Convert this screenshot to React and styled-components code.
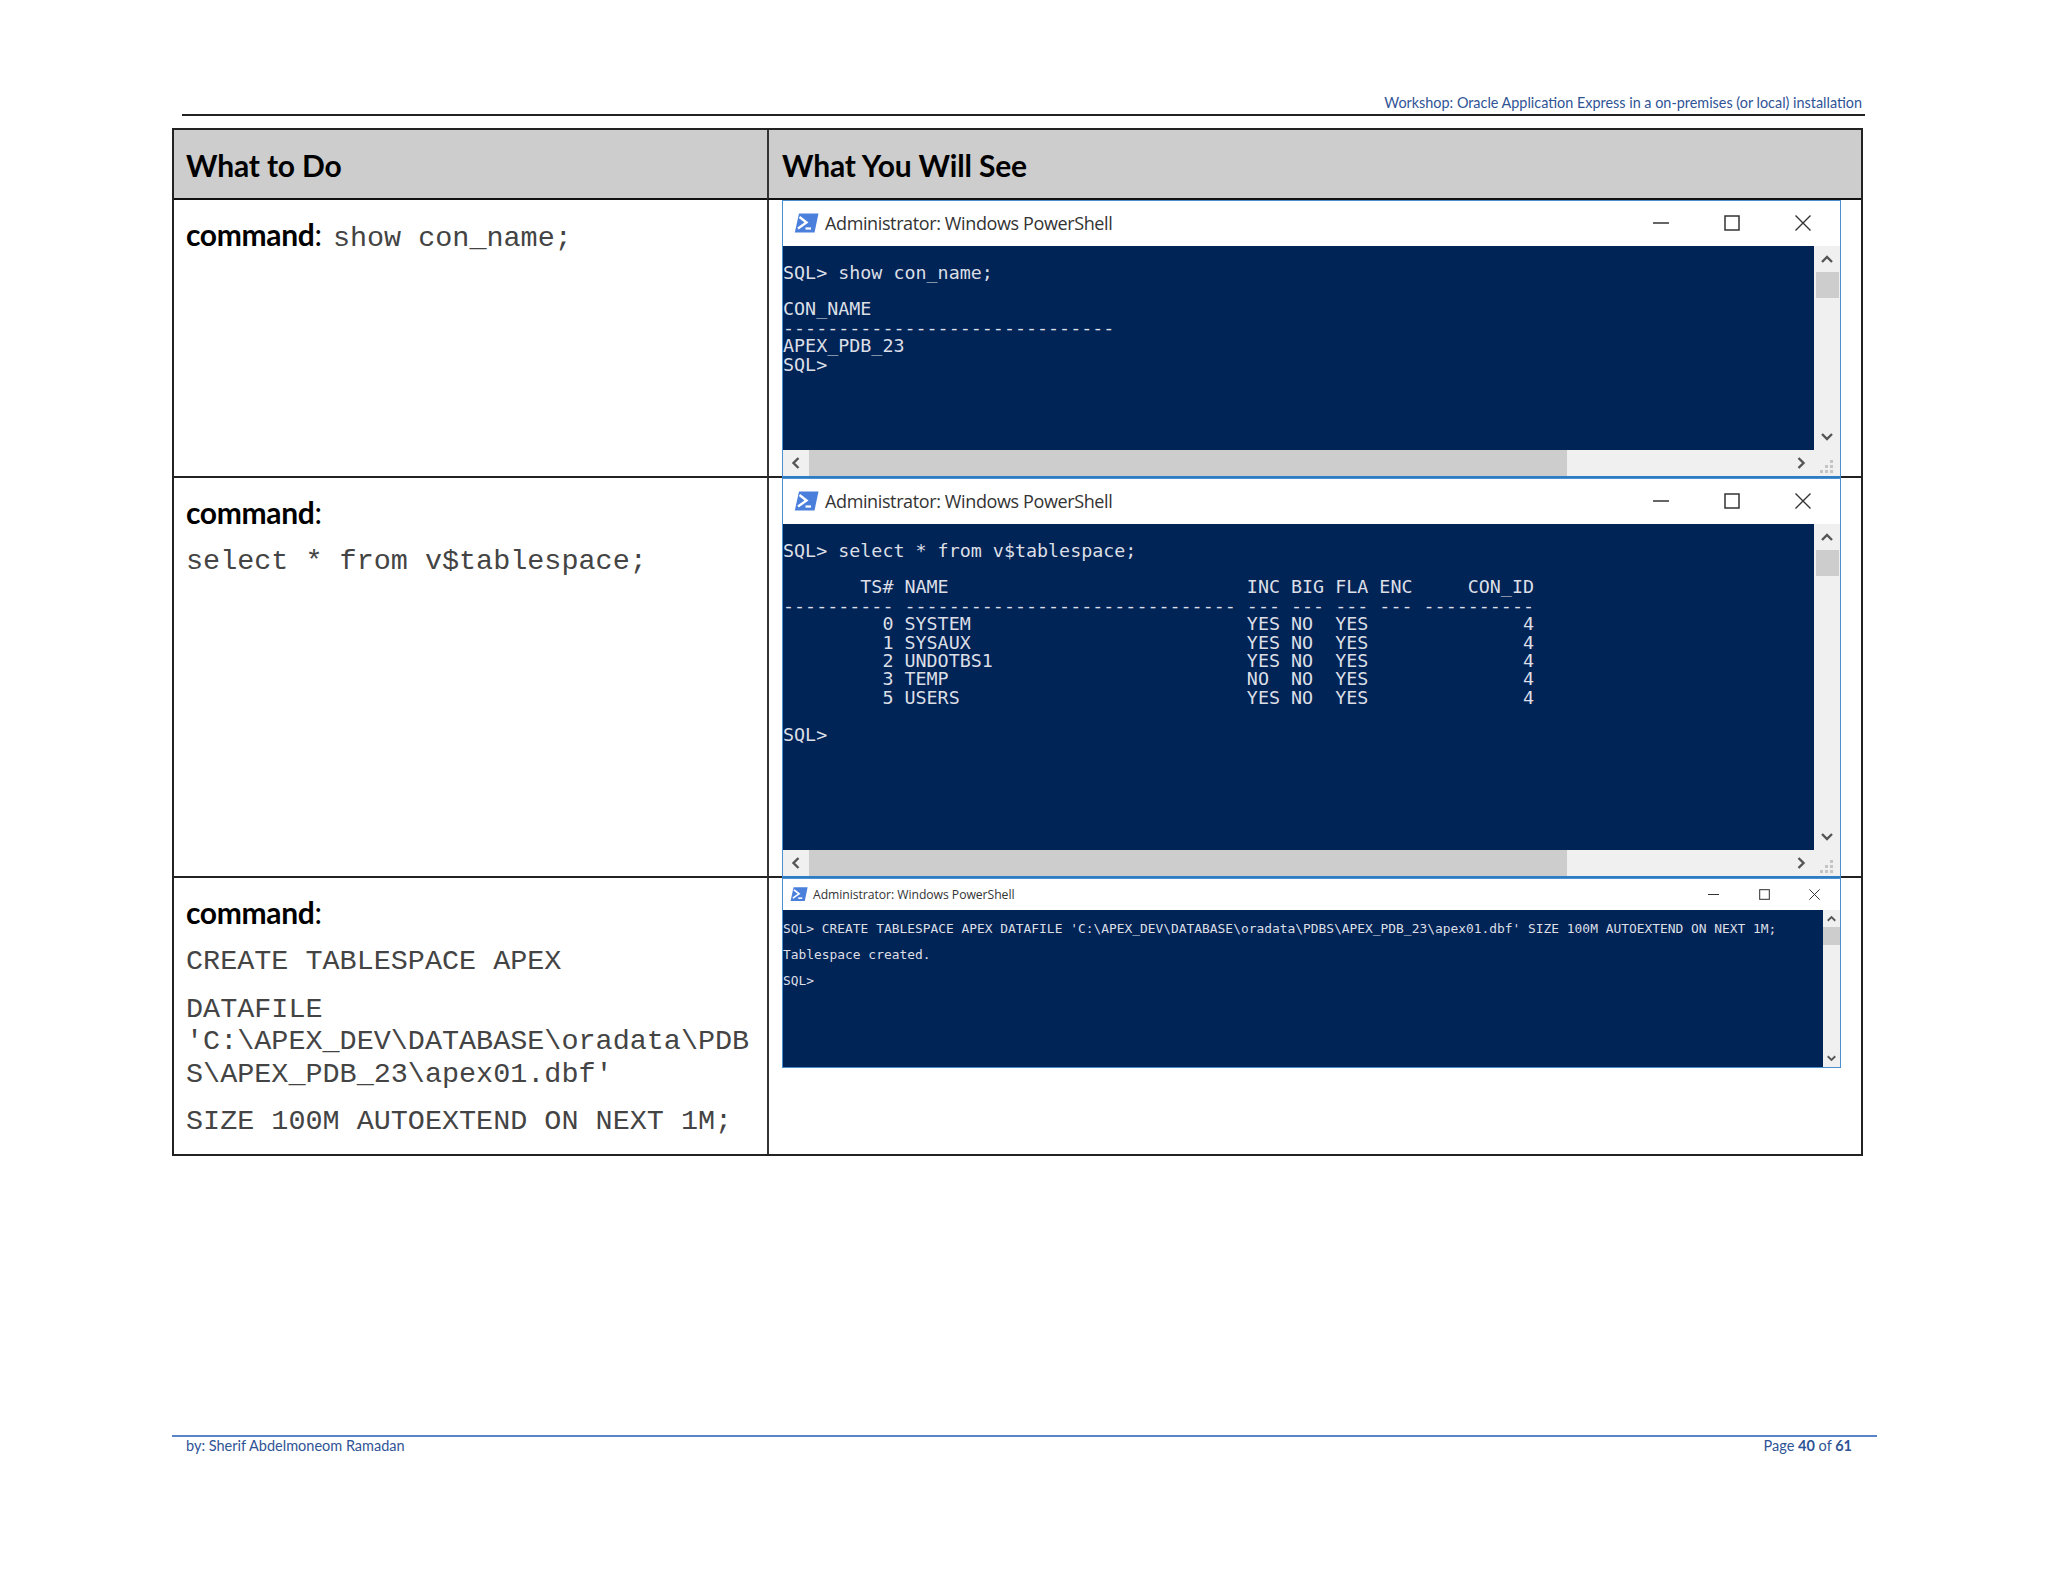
import React from 'react'
import styled, { createGlobalStyle } from 'styled-components'

const GlobalStyle = createGlobalStyle`
  html, body { margin: 0; padding: 0; background: #fff; }
  body { font-family: Lato, "Open Sans", sans-serif; color: #000; }
`

const Page = styled.div`
  width: 2048px;
  height: 1582px;
  box-sizing: border-box;
  padding-top: 94px;
  display: flex;
  flex-direction: column;
`
const PageHeader = styled.div`
  margin-left: 182px;
  width: 1683px;
  height: 22px;
  box-sizing: border-box;
  border-bottom: 2px solid #222;
  padding-right: 3px;
  text-align: right;
  font-size: 14.4px;
  line-height: 18px;
  color: #2f5496;
`
const Table = styled.div`
  margin: 12px 0 0 172px;
  width: 1691px;
  box-sizing: border-box;
  border: 2px solid #222;
  display: grid;
  grid-template-columns: 593px 1fr;
  grid-template-rows: 70px 278px 400px 276px;
`
const HeadCell = styled.div`
  background: #cdcdcd;
  border-bottom: 2px solid #111;
  border-left: ${p => (p.$first ? 'none' : '2px solid #333')};
  padding: 17px 0 0 ${p => (p.$first ? '12px' : '13px')};
  font-size: 30px;
  line-height: 36px;
  font-weight: 700;
  letter-spacing: -0.15px;
`
const TextCell = styled.div`
  border-bottom: ${p => (p.$last ? 'none' : '2px solid #222')};
  padding: 15px 12px 0 12px;
`
const ShotCell = styled.div`
  border-left: 2px solid #333;
  border-bottom: ${p => (p.$last ? 'none' : '2px solid #222')};
  padding-left: 13px;
  padding-right: 20px;
`
const Label = styled.div`
  font-size: 30px;
  line-height: 38px;
  letter-spacing: -0.35px;
  margin-bottom: ${p => p.$gap || 0}px;
  strong { font-weight: 700; }
  span { font-weight: 400; }
`
const Code = styled.span`
  font-family: "Liberation Mono", "Courier New", monospace;
  font-size: 28.45px;
  letter-spacing: 0;
  margin-left: 4px;
  color: #444;
`
const CodeBlock = styled.div`
  font-family: "Liberation Mono", "Courier New", monospace;
  font-size: 28.45px;
  line-height: 32.5px;
  color: #444;
  margin-bottom: 15px;
  overflow-wrap: anywhere;
`

const Win = styled.div`
  height: ${p => p.$height}px;
  box-sizing: border-box;
  border: 1.5px solid #4a90d0;
  ${p => (p.$scrollH ? 'border-bottom-width: 2px; border-bottom-color: #2d7cc4;' : '')}
  background: #fff;
  display: flex;
  flex-direction: column;
`
const TitleBar = styled.div`
  flex: none;
  height: ${p => (p.$small ? 31 : 45)}px;
  box-sizing: border-box;
  padding-bottom: 1px;
  display: flex;
  align-items: center;
  padding-left: ${p => (p.$small ? 7 : 11)}px;
  gap: ${p => (p.$small ? 5 : 6)}px;
  font-family: "Open Sans", sans-serif;
  font-size: ${p => (p.$small ? 12.2 : 18)}px;
  letter-spacing: ${p => (p.$small ? -0.05 : -0.38)}px;
  color: #333;
`
const TitleText = styled.div`
  flex: 1;
  white-space: nowrap;
`
const Controls = styled.div`
  display: flex;
  align-items: center;
  gap: ${p => (p.$small ? 39.5 : 55)}px;
  padding-right: ${p => (p.$small ? 20 : 29)}px;
  svg { display: block; }
`
const Body = styled.div`
  flex: 1;
  min-height: 0;
  display: flex;
`
const Terminal = styled.pre`
  flex: 1;
  margin: 0;
  padding-top: ${p => (p.$small ? 11.5 : 17.5)}px;
  background: #012456;
  color: #dcdfe6;
  font-family: "DejaVu Sans Mono", "Liberation Mono", monospace;
  font-size: ${p => (p.$small ? 12.9 : 18.35)}px;
  line-height: ${p => (p.$small ? 13.2 : 18.4)}px;
  overflow: hidden;
`
const VScroll = styled.div`
  flex: none;
  width: ${p => (p.$small ? 17 : 26)}px;
  background: #f0f0f0;
  display: flex;
  flex-direction: column;
  align-items: center;
  box-sizing: border-box;
  svg { display: block; flex: none; }
`
const ArrowBox = styled.div`
  flex: none;
  height: ${p => p.$size}px;
  display: flex;
  align-items: center;
  justify-content: center;
`
const VThumb = styled.div`
  flex: none;
  width: ${p => (p.$small ? 17 : 23)}px;
  height: ${p => (p.$small ? 18 : 26)}px;
  background: #cdcdcd;
`
const Spacer = styled.div`
  flex: 1;
`
const HScroll = styled.div`
  flex: none;
  height: 26px;
  background: #f0f0f0;
  display: flex;
  align-items: center;
`
const HArrow = styled.div`
  flex: none;
  width: ${p => p.$w}px;
  height: 100%;
  display: flex;
  align-items: center;
  justify-content: center;
`
const HThumb = styled.div`
  flex: none;
  width: 758px;
  height: 100%;
  background: #cdcdcd;
`
const Grip = styled.div`
  flex: none;
  width: 26px;
  height: 100%;
  display: flex;
  align-items: flex-end;
  justify-content: center;
  padding-bottom: 2px;
  box-sizing: border-box;
`
const PageFooter = styled.div`
  margin: 279px 0 0 172px;
  width: 1705px;
  box-sizing: border-box;
  border-top: 2px solid #5b84c8;
  padding: 0 25px 0 14px;
  display: flex;
  justify-content: space-between;
  font-size: 14.5px;
  line-height: 18px;
  color: #2f5496;
  strong { font-weight: 700; }
`

const PsIcon = ({ size }) => (
  <svg width={size} height={size * 0.8} viewBox="0 0 25 20">
    <path d="M5 0.5H24.5L20.5 19.5H0.8Z" fill="#4a7fdc" />
    <path d="M5.5 4L12.5 9.5L4 15.5" fill="none" stroke="#fff" strokeWidth="2.4" />
    <path d="M11.5 15.5H17" stroke="#fff" strokeWidth="2.2" />
  </svg>
)

const WinButtons = ({ small }) => {
  const s = small ? 11 : 16
  return (
    <Controls $small={small}>
      <svg width={s} height={s} viewBox="0 0 16 16"><path d="M0 8H16" stroke="#333" strokeWidth="1.5" /></svg>
      <svg width={s} height={s} viewBox="0 0 16 16"><rect x="1" y="1" width="14" height="14" fill="none" stroke="#333" strokeWidth="1.5" /></svg>
      <svg width={s} height={s} viewBox="0 0 16 16"><path d="M0.5 0.5L15.5 15.5M15.5 0.5L0.5 15.5" stroke="#333" strokeWidth="1.4" /></svg>
    </Controls>
  )
}

const Chevron = ({ dir, size = 12 }) => {
  const paths = {
    up: 'M1 9L6 4L11 9',
    down: 'M1 3L6 8L11 3',
    left: 'M8.5 1L3.5 6L8.5 11',
    right: 'M3.5 1L8.5 6L3.5 11',
  }
  return (
    <svg width={size} height={size} viewBox="0 0 12 12">
      <path d={paths[dir]} fill="none" stroke="#555" strokeWidth="2.4" />
    </svg>
  )
}

const GripDots = () => (
  <svg width="14" height="14" viewBox="0 0 14 14" fill="#c4c4c4">
    <rect x="10" y="0" width="3" height="3" />
    <rect x="5" y="5" width="3" height="3" />
    <rect x="10" y="5" width="3" height="3" />
    <rect x="0" y="10" width="3" height="3" />
    <rect x="5" y="10" width="3" height="3" />
    <rect x="10" y="10" width="3" height="3" />
  </svg>
)

const ShellWindow = ({ height, small, text }) => (
  <Win $height={height} $scrollH={!small}>
    <TitleBar $small={small}>
      <PsIcon size={small ? 18 : 25} />
      <TitleText>Administrator: Windows PowerShell</TitleText>
      <WinButtons small={small} />
    </TitleBar>
    <Body>
      <Terminal $small={small}>{text}</Terminal>
      <VScroll $small={small}>
        <ArrowBox $size={small ? 17 : 26}><Chevron dir="up" size={small ? 9 : 12} /></ArrowBox>
        <VThumb $small={small} />
        <Spacer />
        <ArrowBox $size={small ? 17 : 26}><Chevron dir="down" size={small ? 9 : 12} /></ArrowBox>
      </VScroll>
    </Body>
    {!small && (
      <HScroll>
        <HArrow $w={26}><Chevron dir="left" /></HArrow>
        <HThumb />
        <Spacer />
        <HArrow $w={26}><Chevron dir="right" /></HArrow>
        <Grip><GripDots /></Grip>
      </HScroll>
    )}
  </Win>
)

const conNameText = `SQL> show con_name;

CON_NAME
------------------------------
APEX_PDB_23
SQL>`

const tablespaceText = `SQL> select * from v$tablespace;

       TS# NAME                           INC BIG FLA ENC     CON_ID
---------- ------------------------------ --- --- --- --- ----------
         0 SYSTEM                         YES NO  YES              4
         1 SYSAUX                         YES NO  YES              4
         2 UNDOTBS1                       YES NO  YES              4
         3 TEMP                           NO  NO  YES              4
         5 USERS                          YES NO  YES              4

SQL>`

const createText = `SQL> CREATE TABLESPACE APEX DATAFILE 'C:\\APEX_DEV\\DATABASE\\oradata\\PDBS\\APEX_PDB_23\\apex01.dbf' SIZE 100M AUTOEXTEND ON NEXT 1M;

Tablespace created.

SQL>`

export default function App() {
  return (
    <Page>
      <GlobalStyle />
      <PageHeader>Workshop: Oracle Application Express in a on-premises (or local) installation</PageHeader>
      <Table>
        <HeadCell $first>What to Do</HeadCell>
        <HeadCell>What You Will See</HeadCell>

        <TextCell>
          <Label><strong>command</strong><span>: </span><Code>show con_name;</Code></Label>
        </TextCell>
        <ShotCell>
          <ShellWindow height={278} text={conNameText} />
        </ShotCell>

        <TextCell>
          <Label $gap={15}><strong>command</strong><span>:</span></Label>
          <CodeBlock>select * from v$tablespace;</CodeBlock>
        </TextCell>
        <ShotCell>
          <ShellWindow height={400} text={tablespaceText} />
        </ShotCell>

        <TextCell $last>
          <Label $gap={15}><strong>command</strong><span>:</span></Label>
          <CodeBlock>CREATE TABLESPACE APEX</CodeBlock>
          <CodeBlock>DATAFILE 'C:\APEX_DEV\DATABASE\oradata\PDBS\APEX_PDB_23\apex01.dbf'</CodeBlock>
          <CodeBlock>SIZE 100M AUTOEXTEND ON NEXT 1M;</CodeBlock>
        </TextCell>
        <ShotCell $last>
          <ShellWindow height={190} small text={createText} />
        </ShotCell>
      </Table>
      <PageFooter>
        <span>by: Sherif Abdelmoneom Ramadan</span>
        <span>Page <strong>40</strong> of <strong>61</strong></span>
      </PageFooter>
    </Page>
  )
}
